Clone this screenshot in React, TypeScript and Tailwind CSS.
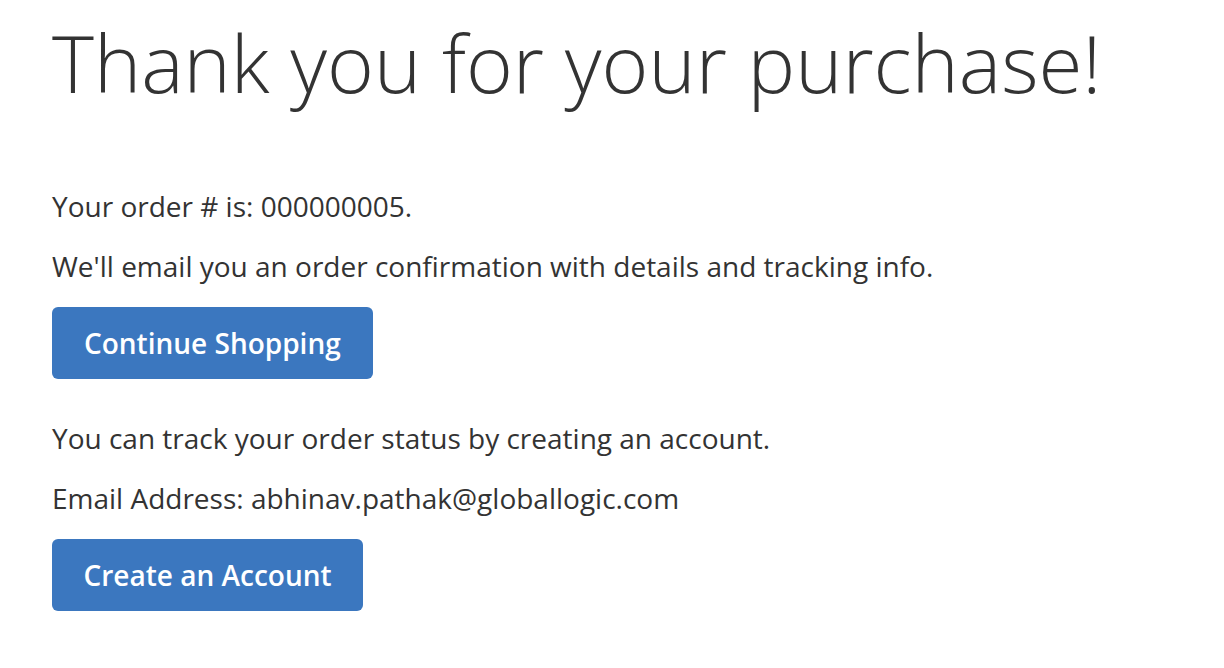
import React from 'react';

const OrderSuccess: React.FC = () => {
  return (
    <div className="min-h-screen bg-white pl-[52px] pt-[18px] text-[#333333] [font-family:'Open_Sans',sans-serif]">
      {/* Page title */}
      <h1 className="text-[80px] font-light leading-[88px] tracking-normal">
        Thank you for your purchase!
      </h1>

      <div className="mt-[80px] text-[28px] leading-[40px]">
        <p className="mb-5">Your order # is: 000000005.</p>
        <p className="mb-[21px]">We'll email you an order confirmation with details and tracking info.</p>
        <div className="mb-[39px]">
          <button
            type="button"
            className="h-[72px] rounded-[6px] bg-[#3b77bf] px-[32px] text-[28px] font-semibold text-white"
          >
            Continue Shopping
          </button>
        </div>

        <p className="mb-5">You can track your order status by creating an account.</p>
        <p className="mb-[21px]">Email Address: abhinav.pathak@globallogic.com</p>
        <button
          type="button"
          className="h-[72px] rounded-[6px] bg-[#3b77bf] px-[31.5px] text-[28px] font-semibold text-white"
        >
          Create an Account
        </button>
      </div>
    </div>
  );
};

export default function App() {
  return <OrderSuccess />;
}
